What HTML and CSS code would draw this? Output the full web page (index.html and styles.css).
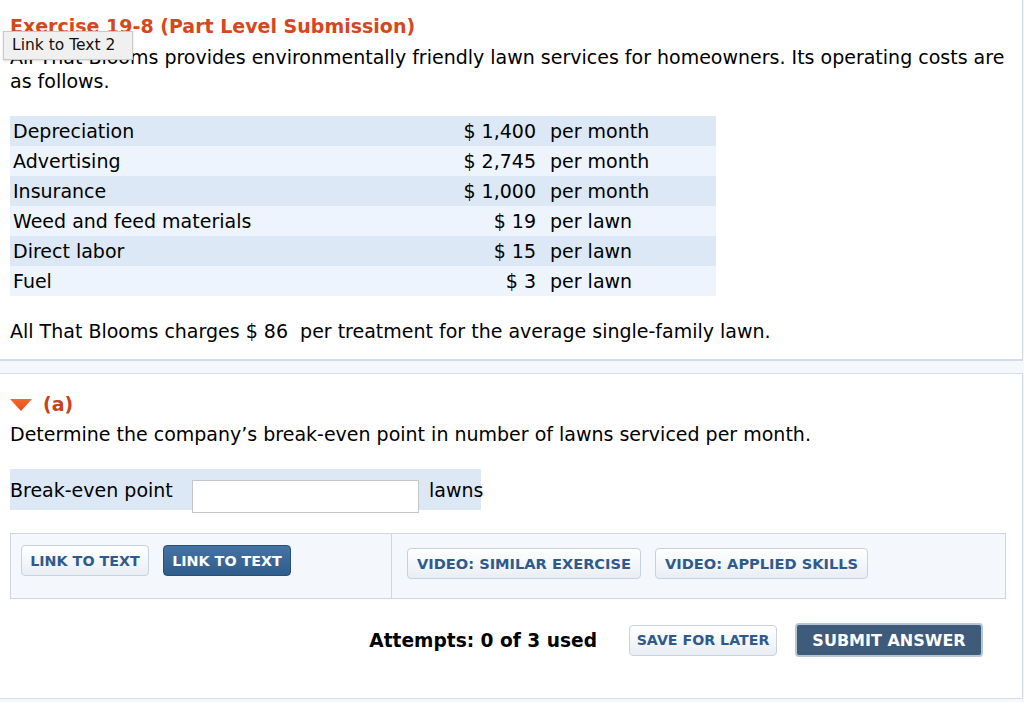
FILE: index.html
```html
<!DOCTYPE html>
<html>
<head>
<meta charset="utf-8">
<link rel="stylesheet" href="styles.css">
</head>
<body>
<div class="page">
  <section class="panel intro">
    <div class="title-wrap">
      <h1 class="title">Exercise 19-8 (Part Level Submission)</h1>
      <div class="tooltip">Link to Text 2</div>
    </div>
    <p class="text lead">All That Blooms provides environmentally friendly lawn services for homeowners. Its operating costs are as follows.</p>
    <table class="costs">
      <tr class="dark"><td class="c1">Depreciation</td><td class="c2">$ 1,400</td><td class="c3">per month</td></tr>
      <tr class="light"><td class="c1">Advertising</td><td class="c2">$ 2,745</td><td class="c3">per month</td></tr>
      <tr class="dark"><td class="c1">Insurance</td><td class="c2">$ 1,000</td><td class="c3">per month</td></tr>
      <tr class="light"><td class="c1">Weed and feed materials</td><td class="c2">$ 19</td><td class="c3">per lawn</td></tr>
      <tr class="dark"><td class="c1">Direct labor</td><td class="c2">$ 15</td><td class="c3">per lawn</td></tr>
      <tr class="light"><td class="c1">Fuel</td><td class="c2">$ 3</td><td class="c3">per lawn</td></tr>
    </table>
    <p class="text charges">All That Blooms charges $ 86&nbsp; per treatment for the average single-family lawn.</p>
  </section>
  <section class="panel part">
    <div class="part-head">
      <svg class="tri" width="22" height="12" viewBox="0 0 22 12"><defs><linearGradient id="g" x1="0" y1="0" x2="0" y2="1"><stop offset="0" stop-color="#f26a2c"/><stop offset="1" stop-color="#ea4a18"/></linearGradient></defs><polygon points="0,0 22,0 11,12" fill="url(#g)"/></svg>
      <span class="part-label">(a)</span>
    </div>
    <p class="text question">Determine the company’s break-even point in number of lawns serviced per month.</p>
    <div class="answer-row">
      <span class="answer-label">Break-even point</span>
      <input class="answer-input" type="text">
      <span class="answer-unit">lawns</span>
    </div>
    <div class="tools">
      <div class="tools-left">
        <span class="btn btn-light btn-link">LINK TO TEXT</span>
        <span class="btn btn-dark btn-link">LINK TO TEXT</span>
      </div>
      <div class="tools-right">
        <span class="btn btn-light btn-video">VIDEO: SIMILAR EXERCISE</span>
        <span class="btn btn-light btn-video">VIDEO: APPLIED SKILLS</span>
      </div>
    </div>
    <div class="submit-row">
      <span class="attempts">Attempts: 0 of 3 used</span>
      <span class="btn btn-light btn-save">SAVE FOR LATER</span>
      <span class="btn btn-submit">SUBMIT ANSWER</span>
    </div>
  </section>
</div>
</body>
</html>
```
FILE: styles.css
```css
html, body {
  margin: 0;
  padding: 0;
  background: #f4f7fb;
}
body {
  font-family: "DejaVu Sans", Verdana, sans-serif;
  font-size: 19px;
  color: #000;
}
.page {
  width: 1024px;
}
.panel {
  background: #fff;
  border-right: 1px solid #cfd8e3;
  padding-left: 10px;
  box-sizing: border-box;
  width: 1023px;
}
.intro {
  padding-top: 14px;
  padding-bottom: 16px;
  border-bottom: 2px solid #d3dce7;
}
.title-wrap {
  position: relative;
}
.title {
  margin: 0;
  font-size: 19px;
  line-height: 24px;
  font-weight: bold;
  color: #d6471c;
}
.tooltip {
  position: absolute;
  left: -7px;
  top: 17px;
  width: 120px;
  height: 27px;
  background: #f0f0f0;
  border: 1px solid #c9c9c9;
  box-shadow: 0 1px 2px rgba(0,0,0,0.15);
  font-size: 15.5px;
  line-height: 27px;
  padding-left: 8px;
  color: #111;
}
.text {
  margin: 9px 0 0 0;
  line-height: 24px;
  padding-right: 10px;
}
.lead {
  margin-top: 7px;
}
.costs {
  margin-top: 23px;
  border-collapse: collapse;
  width: 706px;
  table-layout: fixed;
}
.costs td {
  height: 30px;
  padding: 0;
  line-height: 30px;
  white-space: nowrap;
  box-sizing: border-box;
}
.costs tr.dark { background: #dde8f6; }
.costs tr.light { background: #eef4fd; }
.costs .c1 { padding-left: 3px; }
.costs .c2 { width: 120px; text-align: right; padding-right: 4px; }
.costs .c3 { width: 176px; padding-left: 10px; }
.charges {
  margin-top: 23px;
}
.part {
  margin-top: 12px;
  border-top: 1px solid #d3dce7;
  border-bottom: 1px solid #d3dce7;
  padding-top: 18px;
  padding-bottom: 41px;
}
.part-head {
  display: flex;
  align-items: center;
  height: 24px;
}
.tri {
  display: block;
  margin-right: 11px;
  margin-top: 2px;
}
.part-label {
  font-weight: bold;
  color: #c9421a;
  line-height: 24px;
}
.question {
  margin-top: 6px;
}
.answer-row {
  margin-top: 23px;
  width: 471px;
  height: 41px;
  background: #dde8f6;
  display: flex;
  align-items: flex-start;
}
.answer-label {
  flex: 0 0 182px;
  white-space: nowrap;
  padding-top: 9px;
  line-height: 24px;
}
.answer-input {
  flex: 0 0 227px;
  margin: 11px 0 0 0;
  width: 227px;
  height: 33px;
  box-sizing: border-box;
  border: 1px solid #c3c7cc;
  background: #fff;
  padding: 0;
}
.answer-unit {
  white-space: nowrap;
  padding-top: 9px;
  line-height: 24px;
  margin-left: 10px;
}
.tools {
  margin-top: 23px;
  width: 996px;
  height: 66px;
  box-sizing: border-box;
  border: 1px solid #cdd6e1;
  background: #f4f7fb;
  display: flex;
}
.tools-left {
  width: 381px;
  box-sizing: border-box;
  border-right: 1px solid #cdd6e1;
  padding: 11px 0 0 10px;
  display: flex;
  gap: 14px;
  align-items: flex-start;
}
.tools-right {
  padding: 14px 0 0 15px;
  display: flex;
  gap: 14px;
  align-items: flex-start;
}
.btn {
  display: inline-flex;
  align-items: center;
  justify-content: center;
  height: 31px;
  box-sizing: border-box;
  padding: 0 9px;
  border-radius: 4px;
  font-weight: bold;
  white-space: nowrap;
}
.btn-link {
  font-size: 14.3px;
  width: 128px;
  padding: 0;
}
.btn-video {
  font-size: 14.6px;
}
.btn-light {
  background: linear-gradient(#ffffff, #e9eef4);
  border: 1px solid #c8d2dd;
  color: #2f5a8b;
}
.btn-dark {
  background: linear-gradient(#4474a3, #2f5d8b);
  border: 1px solid #2a4f77;
  color: #fff;
}
.submit-row {
  margin-top: 24px;
  width: 996px;
  display: flex;
  justify-content: flex-end;
  align-items: center;
  padding-right: 23px;
  box-sizing: border-box;
}
.attempts {
  font-weight: bold;
  font-size: 18.6px;
  margin-right: 32px;
}
.btn-save {
  font-size: 14.2px;
  margin-right: 18px;
  width: 148px;
  padding: 0;
}
.btn-submit {
  height: 34px;
  width: 188px;
  padding: 0;
  background: #3e5b7b;
  color: #fff;
  font-size: 16px;
  border: 2px solid #b7c4d3;
}
```
